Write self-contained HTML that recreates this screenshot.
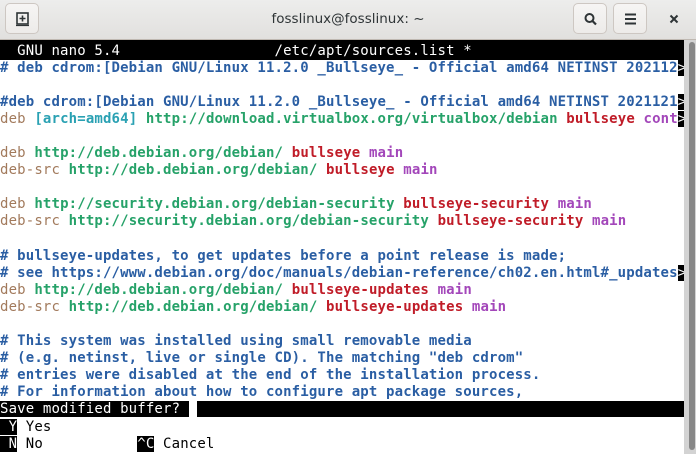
<!DOCTYPE html>
<html><head><meta charset="utf-8"><style>
*{margin:0;padding:0;box-sizing:border-box}
body{width:696px;height:454px;overflow:hidden;background:#fff;position:relative;font-family:"DejaVu Sans Mono","Liberation Mono",monospace}
.hdr{position:absolute;left:0;top:0;width:696px;height:40px;background:linear-gradient(#ededec,#e1e0de);border-bottom:1px solid #bfb8b1}
.btn{position:absolute;top:3px;width:34px;height:31px;border:1px solid #cdc7c2;border-radius:5px;background:linear-gradient(#f6f5f4,#edebe9)}
.ttl{position:absolute;left:0;width:696px;top:11px;text-align:center;font-family:"DejaVu Sans",sans-serif;font-size:13.5px;color:#2e3436}
.blk{position:absolute;left:0;top:40px;width:684px;height:4px;background:#000}
.term{position:absolute;left:0;top:42.5px;width:684px;height:412px;overflow:hidden}
.l{height:17.1px;line-height:17.1px;font-size:14px;letter-spacing:0.15px;white-space:pre;font-weight:bold;position:relative}
.c{color:#2a5ea3}.d{color:#a27a5c;font-weight:normal}.g{color:#26a269}.r{color:#c01c28}.p{color:#a347ba}.a{color:#2aa1b3}
.inv{background:#000;color:#fff;font-weight:normal}
.n{font-weight:normal;color:#000}
.sb{position:absolute;left:684px;top:40px;width:12px;height:414px;background:#d3d3d3}
.th{position:absolute;left:689px;top:42px;width:6px;height:408px;background:#878787;border-radius:3px}
</style></head><body>
<div class="hdr">
<div class="btn" style="left:5px"><svg width="34" height="31" viewBox="0 0 34 31"><rect x="11" y="9" width="11" height="11" fill="none" stroke="#2e3436" stroke-width="1.6"/><path d="M16.5 11.5v6M13.5 14.5h6" stroke="#2e3436" stroke-width="1.6"/><path d="M10 21.5h13" stroke="#2e3436" stroke-width="1.2"/></svg></div>
<div class="ttl">fosslinux@fosslinux: ~</div>
<div class="btn" style="left:573px"><svg width="34" height="31" viewBox="0 0 34 31"><circle cx="15.5" cy="14" r="4" fill="none" stroke="#2e3436" stroke-width="2"/><path d="M18.5 17l3.5 3.5" stroke="#2e3436" stroke-width="2.2"/></svg></div>
<div class="btn" style="left:613px"><svg width="34" height="31" viewBox="0 0 34 31"><path d="M11 10.5h11M11 15h11M11 19.5h11" stroke="#2e3436" stroke-width="2"/></svg></div>
<svg style="position:absolute;left:668px;top:13px" width="12" height="12" viewBox="0 0 12 12"><path d="M2.5 2.5l7 7M9.5 2.5l-7 7" stroke="#2e3436" stroke-width="2"/></svg>
</div>
<div class="blk"></div>
<div class="term">
<div class="l inv">  GNU nano 5.4                  /etc/apt/sources.list *                         </div>
<div class="l c"># deb cdrom:[Debian GNU/Linux 11.2.0 _Bullseye_ - Official amd64 NETINST 202112<span class="inv">&gt;</span></div>
<div class="l"> </div>
<div class="l c">#deb cdrom:[Debian GNU/Linux 11.2.0 _Bullseye_ - Official amd64 NETINST 2021121<span class="inv">&gt;</span></div>
<div class="l"><span class="d">deb</span> <span class="a">[arch=amd64]</span> <span class="g">http://download.virtualbox.org/virtualbox/debian</span> <span class="r">bullseye</span> <span class="p">cont</span><span class="inv">&gt;</span></div>
<div class="l"> </div>
<div class="l"><span class="d">deb</span> <span class="g">http://deb.debian.org/debian/</span> <span class="r">bullseye</span> <span class="p">main</span></div>
<div class="l"><span class="d">deb-src</span> <span class="g">http://deb.debian.org/debian/</span> <span class="r">bullseye</span> <span class="p">main</span></div>
<div class="l"> </div>
<div class="l"><span class="d">deb</span> <span class="g">http://security.debian.org/debian-security</span> <span class="r">bullseye-security</span> <span class="p">main</span></div>
<div class="l"><span class="d">deb-src</span> <span class="g">http://security.debian.org/debian-security</span> <span class="r">bullseye-security</span> <span class="p">main</span></div>
<div class="l"> </div>
<div class="l c"># bullseye-updates, to get updates before a point release is made;</div>
<div class="l c"># see https://www.debian.org/doc/manuals/debian-reference/ch02.en.html#_updates<span class="inv">&gt;</span></div>
<div class="l"><span class="d">deb</span> <span class="g">http://deb.debian.org/debian/</span> <span class="r">bullseye-updates</span> <span class="p">main</span></div>
<div class="l"><span class="d">deb-src</span> <span class="g">http://deb.debian.org/debian/</span> <span class="r">bullseye-updates</span> <span class="p">main</span></div>
<div class="l"> </div>
<div class="l c"># This system was installed using small removable media</div>
<div class="l c"># (e.g. netinst, live or single CD). The matching "deb cdrom"</div>
<div class="l c"># entries were disabled at the end of the installation process.</div>
<div class="l c"># For information about how to configure apt package sources,</div>
<div class="l"><span class="inv">Save modified buffer? </span><span class="n"> </span><span class="inv">                                                           </span></div>
<div class="l n"><span class="inv"> Y</span> Yes</div>
<div class="l n"><span class="inv"> N</span> No           <span class="inv">^C</span> Cancel</div>
</div>
<div class="sb"></div><div class="th"></div>
</body></html>
